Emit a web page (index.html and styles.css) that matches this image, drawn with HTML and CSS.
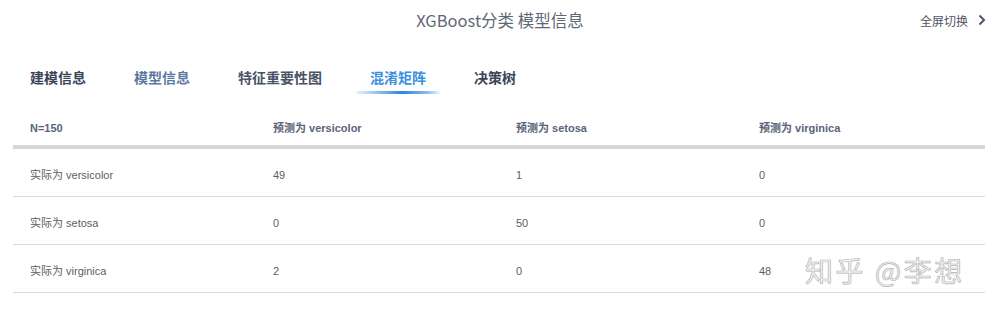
FILE: index.html
```html
<!DOCTYPE html>
<html lang="zh">
<head>
<meta charset="utf-8">
<link rel="stylesheet" href="styles.css">
</head>
<body>
<div class="page">
  <header class="topbar">
    <div class="title">XGBoost分类 模型信息</div>
    <div class="fullscreen">全屏切换
      <svg class="chev" width="8" height="12" viewBox="0 0 8 12"><path d="M1.5 1.5 L6 6 L1.5 10.5" fill="none" stroke="#4a5568" stroke-width="2"/></svg>
    </div>
  </header>
  <nav class="tabs">
    <div class="tab tab-dark">建模信息</div>
    <div class="tab tab-muted">模型信息</div>
    <div class="tab tab-gray">特征重要性图</div>
    <div class="tab tab-active">混淆矩阵</div>
    <div class="tab tab-dark">决策树</div>
  </nav>
  <div class="table-wrap">
    <table class="matrix">
      <thead>
        <tr><th>N=150</th><th>预测为 versicolor</th><th>预测为 setosa</th><th>预测为 virginica</th></tr>
      </thead>
      <tbody>
        <tr><td>实际为 versicolor</td><td>49</td><td>1</td><td>0</td></tr>
        <tr><td>实际为 setosa</td><td>0</td><td>50</td><td>0</td></tr>
        <tr><td>实际为 virginica</td><td>2</td><td>0</td><td>48</td></tr>
      </tbody>
    </table>
    <div class="watermark">知乎 @李想</div>
  </div>
</div>
</body>
</html>
```
FILE: styles.css
```css
html, body {
  margin: 0;
  padding: 0;
  background: #ffffff;
}
body {
  font-family: "Liberation Sans", "Noto Sans CJK SC", sans-serif;
  width: 987px;
  height: 313px;
  overflow: hidden;
}
.page {
  display: flex;
  flex-direction: column;
}
.topbar {
  height: 40px;
  display: flex;
  align-items: center;
}
.title {
  flex: 1;
  text-align: center;
  padding-left: 13px;
  margin-right: -67px;
  font-family: "Noto Sans CJK SC", sans-serif;
  font-size: 16.5px;
  color: #5f6878;
}
.fullscreen {
  width: 67px;
  display: flex;
  align-items: center;
  gap: 10px;
  font-family: "Noto Sans CJK SC", sans-serif;
  font-size: 12px;
  color: #4f5562;
}
.chev {
  display: block;
}
.tabs {
  display: flex;
  padding-left: 13px;
  gap: 14px;
}
.tab {
  padding: 27px 17px 0;
  line-height: 20px;
  font-family: "Noto Sans CJK SC", sans-serif;
  font-size: 14px;
  font-weight: 700;
}
.tab::after {
  content: "";
  display: block;
  height: 3px;
  margin: 4px -14px 0;
}
.tab-dark { color: #3b4558; }
.tab-gray { color: #4a5364; }
.tab-muted { color: #5d78a0; }
.tab-active { color: #3b8fdc; }
.tab-active::after {
  background: linear-gradient(90deg, rgba(190,215,240,0.3) 0%, #a9cdf0 20%, #2a86dc 55%, #8cbdea 85%, rgba(200,222,244,0.3) 100%);
  border-radius: 2px;
}
.table-wrap {
  position: relative;
  padding: 0 2px 0 13px;
}
.matrix {
  width: 972px;
  border-collapse: collapse;
  table-layout: fixed;
}
.matrix th {
  text-align: left;
  font-size: 11px;
  font-weight: 700;
  color: #5a6478;
  line-height: 14px;
  padding: 27px 17px 10px;
  border-bottom: 4px solid #d6d6d6;
}
.matrix td {
  font-size: 11px;
  color: #606060;
  line-height: 14px;
  padding: 19px 17px 14px;
  border-bottom: 1px solid #dcdcdc;
}
.watermark {
  position: absolute;
  left: 805px;
  top: 159px;
  font-family: "Noto Sans CJK SC", sans-serif;
  font-size: 28px;
  letter-spacing: 2.5px;
  color: #f4f4f4;
  -webkit-text-stroke: 0.7px #b4b4b4;
  line-height: 34px;
}
```
